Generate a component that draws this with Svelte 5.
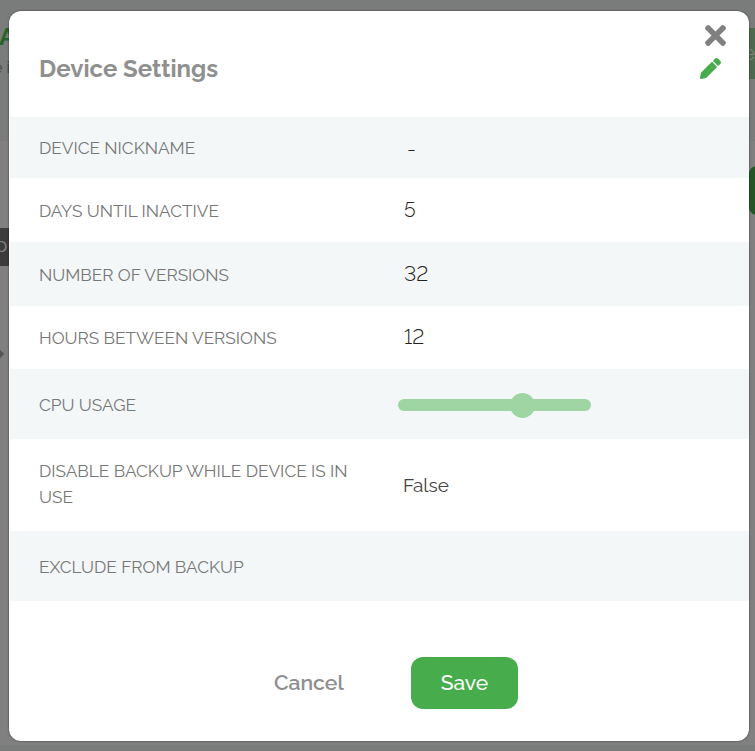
<script>
	const rows = [
		{ label: 'DEVICE NICKNAME', value: '-', kind: 'nickname' },
		{ label: 'DAYS UNTIL INACTIVE', value: '5', kind: 'days' },
		{ label: 'NUMBER OF VERSIONS', value: '32', kind: 'versions' },
		{ label: 'HOURS BETWEEN VERSIONS', value: '12', kind: 'hours' },
		{ label: 'CPU USAGE', slider: 66, kind: 'cpu' },
		{ label: 'DISABLE BACKUP WHILE DEVICE IS IN USE', value: 'False', kind: 'disable' },
		{ label: 'EXCLUDE FROM BACKUP', value: '', kind: 'exclude' }
	];
</script>

<div class="page">
	<!-- dimmed page behind the dialog -->
	<div class="backdrop" aria-hidden="true">
		<div class="page-header"></div>
		<span class="page-title">A</span>
		<span class="page-sub">e i</span>
		<span class="page-tab">p</span>
		<span class="page-arrow"></span>
		<span class="page-button">e</span>
		<span class="page-pill"></span>
		<div class="page-footer"></div>
	</div>

	<div class="dialog" role="dialog" aria-label="Device Settings">
		<header>
			<h1>Device Settings</h1>
			<div class="actions">
				<button class="icon close" aria-label="Close">
					<svg viewBox="0 80 352 352" width="21" height="21">
						<path
							d="M242.72 256l100.07-100.07c12.28-12.28 12.28-32.19 0-44.48l-22.24-22.24c-12.28-12.28-32.19-12.28-44.48 0L176 189.28 75.93 89.21c-12.28-12.28-32.19-12.28-44.48 0L9.21 111.45c-12.28 12.28-12.28 32.19 0 44.48L109.28 256 9.21 356.07c-12.28 12.28-12.28 32.19 0 44.48l22.24 22.24c12.28 12.28 32.2 12.28 44.48 0L176 322.72l100.07 100.07c12.28 12.28 32.2 12.28 44.48 0l22.24-22.24c12.28-12.28 12.28-32.19 0-44.48L242.72 256z"
						/>
					</svg>
				</button>
				<button class="icon edit" aria-label="Edit">
					<svg viewBox="0 0 512 512" width="21" height="21">
						<path
							d="M497.9 142.1l-46.1 46.1c-4.7 4.7-12.3 4.7-17 0l-111-111c-4.7-4.7-4.7-12.3 0-17l46.1-46.1c18.7-18.7 49.1-18.7 67.9 0l60.1 60.1c18.8 18.7 18.8 49.1 0 67.9zM284.2 99.8L21.6 362.4.4 483.9c-2.9 16.4 11.4 30.6 27.8 27.8l121.5-21.3 262.6-262.6c4.7-4.7 4.7-12.3 0-17l-111-111c-4.8-4.7-12.4-4.7-17.1 0z"
						/>
					</svg>
				</button>
			</div>
		</header>

		<div class="rows">
			{#each rows as row (row.kind)}
				<div class="row {row.kind}">
					<span class="label">{row.label}</span>
					{#if row.slider}
						<div class="slider">
							<div class="thumb" style="left:{row.slider}%"></div>
						</div>
					{:else}
						<span class="value">{row.value}</span>
					{/if}
				</div>
			{/each}
		</div>

		<footer>
			<button class="cancel">Cancel</button>
			<button class="save">Save</button>
		</footer>
	</div>
</div>

<style>
	.page {
		position: relative;
		box-sizing: border-box;
		width: 755px;
		height: 751px;
		padding: 11px 6px 10px 9px;
		overflow: hidden;
		background: #808080;
		font-family: Raleway, Lato, sans-serif;
	}

	.backdrop > * {
		position: absolute;
	}

	.page-header {
		top: 0;
		left: 0;
		right: 0;
		height: 141px;
		background: #7a7c7b;
	}

	.page-title {
		top: 21px;
		left: -1px;
		font-size: 25px;
		font-weight: 700;
		color: #24642a;
	}

	.page-sub {
		top: 58px;
		left: -7px;
		font-size: 16px;
		color: #474747;
	}

	.page-tab {
		top: 228px;
		left: 0;
		width: 20px;
		height: 38px;
		line-height: 34px;
		font-size: 20px;
		text-indent: -5px;
		background: #3c3c3c;
		color: #858585;
	}

	.page-arrow {
		top: 351px;
		left: -3px;
		width: 6px;
		height: 6px;
		background: #555;
		transform: rotate(45deg);
	}

	.page-button {
		top: 28px;
		right: 0;
		width: 20px;
		height: 51px;
		line-height: 51px;
		font-size: 20px;
		text-align: right;
		background: #4d694f;
		color: #7b887c;
	}

	.page-pill {
		top: 166px;
		right: -30px;
		width: 36px;
		height: 49px;
		border-radius: 8px;
		background: #245527;
	}

	.page-footer {
		left: 0;
		right: 0;
		bottom: 0;
		height: 6px;
		background: #7a7c7b;
	}

	.dialog {
		position: relative;
		display: flex;
		flex-direction: column;
		height: 730px;
		border-radius: 12px;
		background: #fff;
		box-shadow: 0 0 2px rgba(0, 0, 0, 0.65);
	}

	header {
		display: flex;
		justify-content: space-between;
		box-sizing: border-box;
		height: 106px;
		padding: 14px 23.5px 0 30px;
	}

	h1 {
		margin: 28px 0 0;
		font-size: 24px;
		line-height: 32px;
		font-weight: 700;
		color: #8f8f8f;
	}

	.actions {
		display: flex;
		flex-direction: column;
		align-items: flex-end;
		gap: 12px;
	}

	button {
		margin: 0;
		padding: 0;
		border: 0;
		background: none;
		font-family: inherit;
		cursor: pointer;
	}

	.icon svg {
		display: block;
		fill: currentColor;
	}

	.close {
		color: #808080;
	}

	.edit {
		margin-right: 5px;
		color: #47ad4c;
	}

	.rows {
		padding-left: 1px;
	}

	.row {
		display: flex;
		align-items: center;
		box-sizing: border-box;
		height: 64px;
		padding: 1px 0 0 29px;
	}

	.row:nth-child(odd) {
		background: #f3f7f8;
	}

	.row.nickname {
		height: 61px;
	}

	.row.hours {
		height: 63px;
	}

	.row.cpu,
	.row.exclude {
		height: 70px;
		padding-top: 2px;
	}

	.row.disable {
		height: 92px;
		padding: 0 0 2px 29px;
	}

	.label {
		width: 320px;
		margin-right: 45px;
		font-size: 17.2px;
		line-height: 26px;
		font-weight: 400;
		color: #777;
	}

	.value {
		font-size: 21px;
		line-height: 26px;
		font-weight: 300;
		font-variant-numeric: lining-nums;
		color: #222;
	}

	.days .value,
	.versions .value,
	.hours .value {
		margin-top: -2px;
	}

	.nickname .value {
		padding: 1px 0 0 3px;
	}

	.disable .value {
		margin: 1px 0 0 -1px;
		font-size: 19px;
		font-weight: 400;
		color: #444;
	}

	.slider {
		position: relative;
		width: 193px;
		height: 12px;
		margin-left: -6px;
		border-radius: 6px;
		background: #9fd4a3;
	}

	.thumb {
		position: absolute;
		top: -6px;
		width: 25px;
		height: 25px;
		margin-left: -15px;
		border-radius: 50%;
		background: #9fd4a3;
	}

	footer {
		display: flex;
		align-items: center;
		gap: 67px;
		padding: 56px 0 0 265px;
	}

	footer button {
		padding-bottom: 2px;
		font-size: 21px;
	}

	.cancel {
		width: 70px;
		font-size: 21.2px;
		font-weight: 600;
		text-align: left;
		color: #8f8f8f;
	}

	.save {
		width: 107px;
		height: 52px;
		border-radius: 12px;
		background: #47ad4c;
		font-weight: 500;
		color: #fff;
	}
</style>
